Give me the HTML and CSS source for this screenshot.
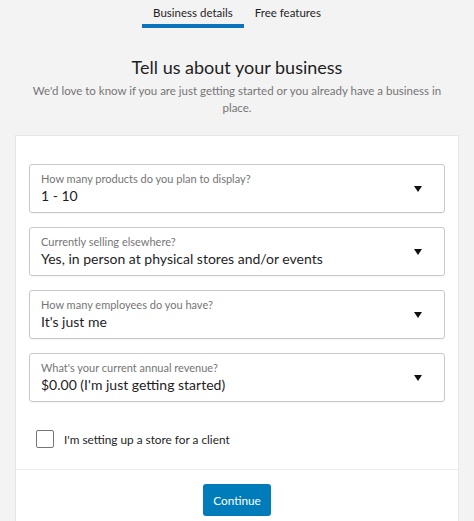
FILE: index.html
```html
<!DOCTYPE html>
<html lang="en">
<head>
<meta charset="utf-8">
<title>Tell us about your business</title>
<link rel="stylesheet" href="styles.css">
</head>
<body>
<div class="page">
  <nav class="tabs">
    <a class="tab active">Business details</a>
    <a class="tab">Free features</a>
  </nav>
  <header class="intro">
    <h1 class="title">Tell us about your business</h1>
    <p class="subtitle">We'd love to know if you are just getting started or you already have a business in place.</p>
  </header>
  <section class="card">
    <div class="card-body">
      <div class="select">
        <div class="select-text">
          <span class="select-label">How many products do you plan to display?</span>
          <span class="select-value">1 - 10</span>
        </div>
        <span class="caret"></span>
      </div>
      <div class="select">
        <div class="select-text">
          <span class="select-label">Currently selling elsewhere?</span>
          <span class="select-value">Yes, in person at physical stores and/or events</span>
        </div>
        <span class="caret"></span>
      </div>
      <div class="select">
        <div class="select-text">
          <span class="select-label">How many employees do you have?</span>
          <span class="select-value">It's just me</span>
        </div>
        <span class="caret"></span>
      </div>
      <div class="select">
        <div class="select-text">
          <span class="select-label">What's your current annual revenue?</span>
          <span class="select-value">$0.00 (I'm just getting started)</span>
        </div>
        <span class="caret"></span>
      </div>
      <label class="check">
        <span class="check-box"></span>
        <span class="check-label">I'm setting up a store for a client</span>
      </label>
    </div>
    <div class="card-footer">
      <button class="btn-primary">Continue</button>
    </div>
  </section>
</div>
</body>
</html>
```

FILE: styles.css
```css
* { box-sizing: border-box; }
html, body { margin: 0; padding: 0; }
body {
  background: #f3f3f3;
  font-family: "Lato", "Noto Sans", sans-serif;
  color: #1e1e1e;
  width: 474px;
  height: 521px;
  overflow: hidden;
}
.page {
  display: flex;
  flex-direction: column;
  align-items: center;
}
.tabs {
  display: flex;
  height: 28px;
}
.tab {
  font-size: 11.5px;
  line-height: 14px;
  padding: 6px 11px 0;
  color: #1e1e1e;
  border-bottom: 4px solid transparent;
  height: 28px;
}
.tab.active {
  border-bottom-color: #0a74bd;
}
.intro {
  text-align: center;
  width: 428px;
  margin-top: 26px;
}
.title {
  margin: 0;
  font-size: 18px;
  font-weight: 400;
  line-height: 26px;
  color: #1e1e1e;
}
.subtitle {
  margin: 2px 0 0;
  font-size: 11.5px;
  line-height: 17px;
  color: #757575;
}
.card {
  margin-top: 19px;
  width: 444px;
  background: #fff;
  border: 1px solid #e6e6e6;
}
.card-body {
  padding: 28px 13px 21px;
  display: flex;
  flex-direction: column;
  gap: 14px;
  border-bottom: 1px solid #ececec;
}
.select {
  height: 49px;
  border: 1px solid #c8c8c8;
  border-radius: 3px;
  box-shadow: 0 1px 1px rgba(0,0,0,0.04);
  display: flex;
  align-items: center;
  padding: 0 22px 0 11px;
}
.select-text {
  flex: 1;
  display: flex;
  flex-direction: column;
  padding-bottom: 1px;
}
.select-label {
  font-size: 11px;
  line-height: 15px;
  color: #757575;
}
.select-value {
  font-size: 14px;
  line-height: 20px;
  color: #1e1e1e;
}
.caret {
  width: 0;
  height: 0;
  border-left: 4px solid transparent;
  border-right: 4px solid transparent;
  border-top: 6px solid #111;
}
.check {
  display: flex;
  align-items: center;
  gap: 10px;
  margin-top: 14px;
  padding-left: 7px;
}
.check-box {
  width: 18px;
  height: 18px;
  border: 1.5px solid #757575;
  border-radius: 2px;
  background: #fff;
}
.check-label {
  font-size: 11.8px;
  color: #1e1e1e;
}
.card-footer {
  display: flex;
  justify-content: center;
  padding: 14px 0 10px;
}
.btn-primary {
  font-family: inherit;
  font-size: 11.8px;
  color: #fff;
  background: #007cba;
  border: none;
  border-radius: 3px;
  width: 68px;
  height: 32px;
  padding: 0;
}
```
